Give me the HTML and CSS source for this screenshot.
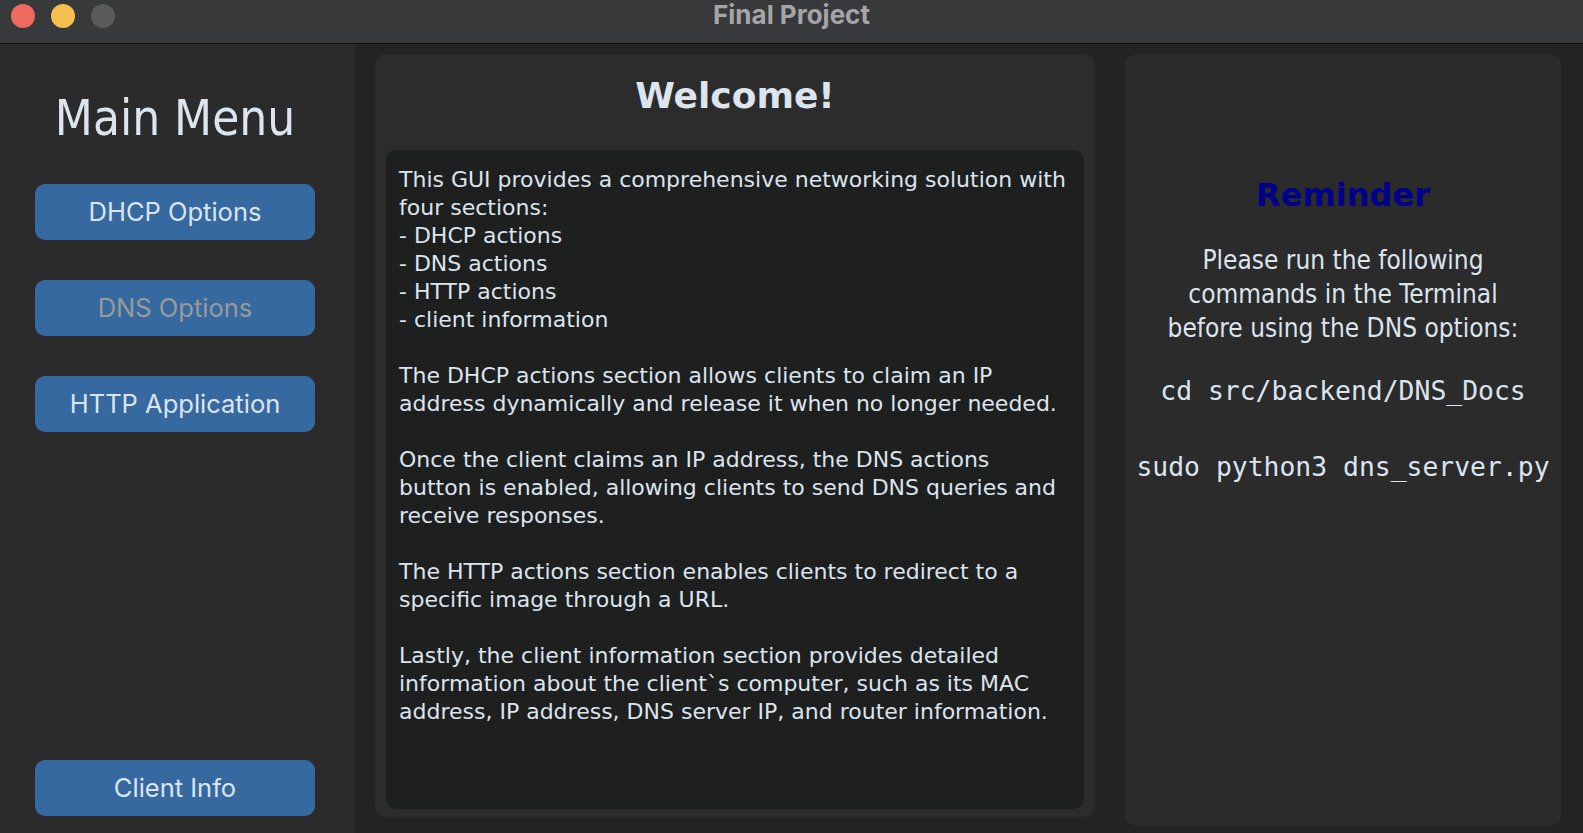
FILE: index.html
```html
<!DOCTYPE html>
<html lang="en">
<head>
<meta charset="utf-8">
<title>Final Project</title>
<link rel="stylesheet" href="styles.css">
</head>
<body>
<div class="window">
  <header class="titlebar">
    <div class="lights">
      <span class="light red"></span>
      <span class="light yellow"></span>
      <span class="light gray"></span>
    </div>
    <div class="title">Final Project</div>
    <div></div>
  </header>
  <div class="app">
    <aside class="sidebar">
      <h1 class="menu-title">Main Menu</h1>
      <button class="btn first">DHCP Options</button>
      <button class="btn disabled">DNS Options</button>
      <button class="btn">HTTP Application</button>
      <button class="btn bottom">Client Info</button>
    </aside>
    <main class="center">
      <h2 class="welcome">Welcome!</h2>
      <div class="textbox">This GUI provides a comprehensive networking solution with
four sections:
- DHCP actions
- DNS actions
- HTTP actions
- client information

The DHCP actions section allows clients to claim an IP
address dynamically and release it when no longer needed.

Once the client claims an IP address, the DNS actions
button is enabled, allowing clients to send DNS queries and
receive responses.

The HTTP actions section enables clients to redirect to a
specific image through a URL.

Lastly, the client information section provides detailed
information about the client`s computer, such as its MAC
address, IP address, DNS server IP, and router information.</div>
    </main>
    <section class="reminder">
      <h2 class="reminder-title">Reminder</h2>
      <p class="reminder-text">Please run the following<br>commands in the Terminal<br>before using the DNS options:</p>
      <div class="cmd">cd src/backend/DNS_Docs</div>
      <div class="cmd second">sudo python3 dns_server.py</div>
    </section>
  </div>
</div>
</body>
</html>
```

FILE: styles.css
```css
html, body {
  margin: 0;
  padding: 0;
}

body {
  width: 1583px;
  height: 833px;
  overflow: hidden;
  background: #242424;
  color: #dce4ee;
  font-family: "DejaVu Sans", Verdana, sans-serif;
}

.window {
  display: flex;
  flex-direction: column;
  height: 833px;
}

/* ---------- title bar ---------- */
.titlebar {
  height: 43px;
  flex: none;
  background: #38393b;
  border-bottom: 1px solid #0e0e0e;
  display: grid;
  grid-template-columns: 1fr auto 1fr;
  align-items: start;
}

.lights {
  display: flex;
  gap: 16px;
  padding: 4px 0 0 11px;
}

.light {
  width: 24px;
  height: 24px;
  border-radius: 50%;
}

.light.red { background: #ee6a5f; }
.light.yellow { background: #f5bf4f; }
.light.gray { background: #5b5b5d; }

.title {
  font-family: Inter, "Liberation Sans", sans-serif;
  font-weight: 700;
  font-size: 26px;
  line-height: 30px;
  color: #a5a5a7;
}

/* ---------- app body ---------- */
.app {
  flex: 1;
  display: flex;
  min-height: 0;
}

/* sidebar */
.sidebar {
  width: 355px;
  flex: none;
  box-sizing: border-box;
  background: #2b2b2b;
  display: flex;
  flex-direction: column;
  padding: 46px 40px 17px 35px;
}

.menu-title {
  margin: 0;
  font-family: "DejaVu Sans Condensed", "DejaVu Sans", sans-serif;
  font-stretch: condensed;
  font-weight: normal;
  font-size: 49px;
  line-height: 57px;
  text-align: center;
  color: #dce4ee;
}

.btn {
  height: 56px;
  flex: none;
  margin-top: 40px;
  padding: 0;
  border: 0;
  border-radius: 10px;
  background: #3669a0;
  color: #dce4ee;
  font-family: Inter, "Liberation Sans", sans-serif;
  font-size: 25.5px;
  line-height: 56px;
  text-align: center;
}

.btn.first { margin-top: 37px; }
.btn.disabled { color: #9a9a9a; }
.btn.bottom { margin-top: auto; }

/* center panel */
.center {
  width: 719px;
  flex: none;
  box-sizing: border-box;
  margin: 10px 0 16px 20px;
  padding: 0 10px 8px 11px;
  background: #2c2c2c;
  border-radius: 10px;
  display: flex;
  flex-direction: column;
}

.welcome {
  margin: 20px 0 32px;
  font-size: 36px;
  line-height: 44px;
  font-weight: bold;
  text-align: center;
  color: #dce4ee;
}

.textbox {
  flex: 1;
  background: #1e1f1f;
  border-radius: 10px;
  padding: 16px 13px 14px;
  font-size: 22px;
  line-height: 28px;
  white-space: pre;
  color: #dce4ee;
}

/* reminder panel */
.reminder {
  width: 436px;
  flex: none;
  box-sizing: border-box;
  margin: 10px 0 7px 31px;
  padding-top: 121px;
  background: #2b2b2b;
  border-radius: 10px;
  text-align: center;
}

.reminder-title {
  margin: 0;
  font-size: 32px;
  line-height: 40px;
  font-weight: bold;
  color: #00008b;
}

.reminder-text {
  margin: 28px 0 0;
  font-family: "DejaVu Sans Condensed", "DejaVu Sans", sans-serif;
  font-stretch: condensed;
  font-size: 26px;
  line-height: 34px;
}

.cmd {
  margin-top: 29px;
  font-family: "DejaVu Sans Mono", "Liberation Mono", monospace;
  font-size: 26.4px;
  line-height: 34px;
  white-space: pre;
}

.cmd.second { margin-top: 42px; }
```
